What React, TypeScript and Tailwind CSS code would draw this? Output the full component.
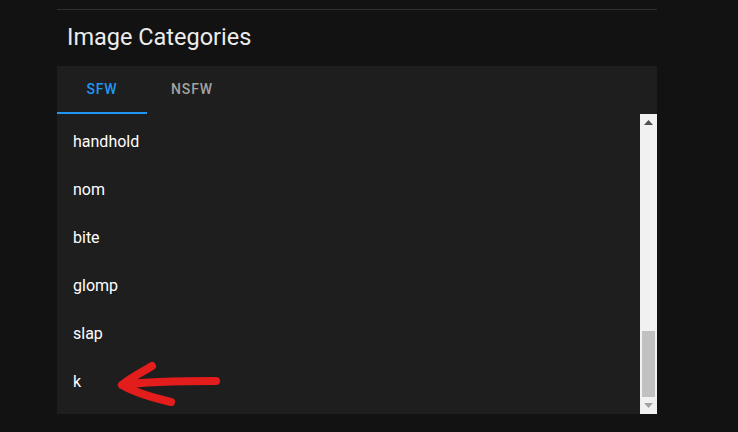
import React from "react"

// Only the tail of the category list is in view (the list is scrolled to its end)
const VISIBLE_CATEGORIES: string[] = ["handhold", "nom", "bite", "glomp", "slap", "k"]

function FakeScrollbar() {
  return (
    <div className="flex w-[17px] shrink-0 flex-col bg-[#f1f1f1]">
      <div className="flex h-[17px] items-center justify-center">
        <svg width="9" height="5" viewBox="0 0 9 5">
          <path d="M4.5 0 L9 5 L0 5 Z" fill="#505050" />
        </svg>
      </div>
      <div className="flex flex-1 flex-col justify-end px-[2px]">
        <div className="h-[66px] bg-[#c1c1c1]" />
      </div>
      <div className="flex h-[17px] items-center justify-center">
        <svg width="9" height="5" viewBox="0 0 9 5">
          <path d="M0 0 L9 0 L4.5 5 Z" fill="#a3a3a3" />
        </svg>
      </div>
    </div>
  )
}

export default function App() {
  return (
    <div
      className="relative h-[432px] w-[738px] overflow-hidden bg-[#121212]"
      style={{ fontFamily: "Roboto, 'Liberation Sans', sans-serif" }}
    >
      <div className="ml-[57px] w-[600px] pt-[9px]">
        <div className="border-t border-[#2f2f2f]" />

        {/* Header */}
        <div className="flex h-[56px] items-center pl-[10px]">
          <h2 className="text-[23.5px] font-normal leading-none text-[#ececec]">Image Categories</h2>
        </div>

        {/* Panel */}
        <div className="flex h-[348px] flex-col bg-[#1e1e1e]">
          <div className="flex h-[48px] shrink-0 border-b-2 border-transparent">
            <button className="flex w-[90px] items-center justify-center text-[14px] font-medium uppercase tracking-[0.06em] text-[#2196f3]">
              SFW
            </button>
            <button className="flex w-[90px] items-center justify-center text-[14px] font-medium uppercase tracking-[0.06em] text-[#a2a2a2]">
              NSFW
            </button>
          </div>

          <div className="flex min-h-0 flex-1">
            <ul className="flex min-w-0 flex-1 flex-col justify-end overflow-hidden pb-2">
              {VISIBLE_CATEGORIES.map((name) => (
                <li key={name} className="flex h-[48px] shrink-0 items-center pl-4 text-[16px] text-white">
                  {name}
                </li>
              ))}
            </ul>
            <FakeScrollbar />
          </div>
        </div>
      </div>

      {/* Active tab indicator */}
      <div className="pointer-events-none absolute left-[57px] top-[112px] h-[2px] w-[90px] bg-[#2196f3]" />

      {/* Hand-drawn annotation arrow */}
      <svg className="pointer-events-none absolute inset-0" width="738" height="432" viewBox="0 0 738 432">
        <path
          d="M216 381 C192 381 150 381 122 385 M152 366 C142 372 130 378 122 385 C134 392 154 398 171 402"
          fill="none"
          stroke="#e31c1c"
          strokeWidth="8"
          strokeLinecap="round"
          strokeLinejoin="round"
        />
      </svg>
    </div>
  )
}
